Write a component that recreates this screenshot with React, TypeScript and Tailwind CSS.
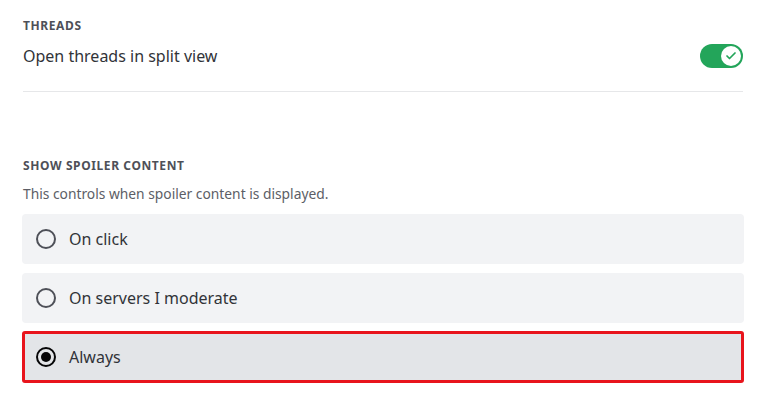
import { Check } from "lucide-react";

const options = [
  { label: "On click", selected: false, gap: "mb-[9px]" },
  { label: "On servers I moderate", selected: false, gap: "mb-[8px]" },
  { label: "Always", selected: true, gap: "" },
];

function Radio({ selected }: { selected: boolean }) {
  if (selected) {
    return (
      <span className="flex h-5 w-5 shrink-0 items-center justify-center rounded-full border-2 border-[#060607]">
        <span className="h-[10px] w-[10px] rounded-full bg-[#060607]" />
      </span>
    );
  }
  return <span className="h-5 w-5 shrink-0 rounded-full border-2 border-[#4e5058]" />;
}

export default function App() {
  return (
    <div className="h-[399px] w-[768px] bg-white font-['Noto_Sans',sans-serif]">
      <div className="ml-[23px] w-[720px] pt-[18px]">
        <h2 className="text-[12px] font-bold uppercase leading-4 tracking-[0.05em] text-[#4e5058]">
          Threads
        </h2>
        <div className="mt-[10px] flex items-center justify-between">
          <span className="text-[16px] leading-6 text-[#313338]">Open threads in split view</span>
          <button className="flex h-6 w-[43px] items-center justify-end rounded-full bg-[#23a55a] px-[2px]">
            <span className="flex h-5 w-5 items-center justify-center rounded-full bg-white">
              <Check className="h-3 w-3 text-[#23a55a]" strokeWidth={3.5} />
            </span>
          </button>
        </div>
        <div className="mt-[23px] h-px bg-[#e6e7e9]" />
      </div>

      <div className="ml-[22px] w-[722px] pt-[66px]">
        <h2 className="ml-px text-[12px] font-bold uppercase leading-4 tracking-[0.05em] text-[#4e5058]">
          Show spoiler content
        </h2>
        <p className="ml-px mt-[10px] text-[13.8px] leading-5 text-[#5c5e66]">
          This controls when spoiler content is displayed.
        </p>
        <div className="mt-[10px] flex flex-col">
          {options.map((o) => (
            <div
              key={o.label}
              className={
                o.selected
                  ? "flex h-[52px] items-center gap-[13px] rounded-[3px] border-[3px] border-[#e8141c] bg-[#e3e5e8] px-[11px]"
                  : `flex h-[50px] items-center gap-[13px] rounded-[4px] bg-[#f2f3f5] px-[14px] ${o.gap}`
              }
            >
              <Radio selected={o.selected} />
              <span className="text-[16px] leading-5 text-[#313338]">{o.label}</span>
            </div>
          ))}
        </div>
      </div>
    </div>
  );
}
